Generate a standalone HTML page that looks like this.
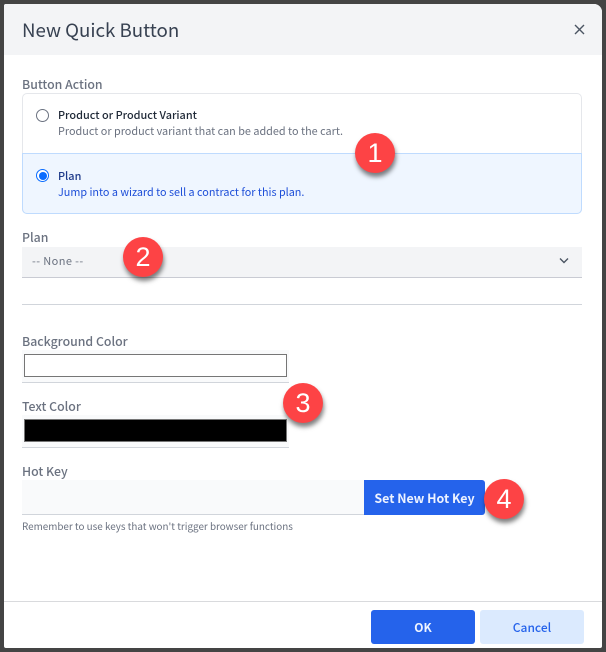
<!DOCTYPE html>
<html><head><meta charset="utf-8">
<style>
*{box-sizing:border-box;margin:0;padding:0}
html,body{width:606px;height:652px;overflow:hidden;background:#444}
body{position:relative;font-family:"Noto Sans CJK JP","Liberation Sans",sans-serif}
.a{position:absolute}
.t{position:absolute;white-space:nowrap;line-height:16px}
.lbl{font-size:12.3px;color:#6b7280;font-weight:500;left:22px}
.badge{position:absolute;width:40px;height:40px;border-radius:50%;background:#fd4345;box-shadow:1px 4px 5px rgba(0,0,0,.5);color:#fff;font:27px/40px "Liberation Sans",sans-serif;text-align:center}
</style></head><body>
<div class="a" id="m" style="left:4px;top:4px;width:598px;height:644px;background:#fff;border-radius:2px 8px 2px 2px;overflow:hidden">
<div class="a" style="left:0;top:0;width:598px;height:51px;background:#f3f4f6"></div>
</div>
<div class="t" style="left:22px;top:18px;font-size:18.7px;line-height:24px;color:#374151">New Quick Button</div>
<svg class="a" style="left:573px;top:23px" width="13" height="13" viewBox="0 0 13 13"><path d="M2 2L11 11M11 2L2 11" stroke="#4b5563" stroke-width="1.4" fill="none"/></svg>

<div class="t lbl" style="top:76px">Button Action</div>
<div class="a" style="left:22px;top:93px;width:560px;height:121px;border:1px solid #e5e7eb;border-radius:5px;background:#fff"></div>
<div class="a" style="left:22px;top:153px;width:560px;height:61px;background:#eff6ff;border:1px solid #bfdbfe;border-radius:0 0 5px 5px"></div>
<div class="a" style="left:36px;top:109px;width:13px;height:13px;border-radius:50%;border:1px solid #6b7280;background:#fff"></div>
<div class="t" style="left:58px;top:107px;font-size:10.9px;font-weight:500;color:#1f2937">Product or Product Variant</div>
<div class="t" style="left:58px;top:123px;font-size:10.85px;color:#6b7280">Product or product variant that can be added to the cart.</div>
<div class="a" style="left:36px;top:169px;width:13px;height:13px;border-radius:50%;border:1px solid #0a6cff;background:#fff"></div>
<div class="a" style="left:38.5px;top:171.5px;width:8px;height:8px;border-radius:50%;background:#0a6cff"></div>
<div class="t" style="left:58px;top:168px;font-size:10.9px;font-weight:500;color:#1e3a8a">Plan</div>
<div class="t" style="left:58px;top:184px;font-size:10.8px;color:#1d4ed8">Jump into a wizard to sell a contract for this plan.</div>

<div class="t lbl" style="top:229px">Plan</div>
<div class="a" style="left:22px;top:247px;width:560px;height:31px;background:#f3f4f6;border-bottom:1px solid #c9cbd3"></div>
<div class="t" style="left:32px;top:253px;font-size:11px;letter-spacing:.4px;color:#6b7280">-- None --</div>
<svg class="a" style="left:558px;top:256px" width="12" height="10" viewBox="0 0 12 10"><path d="M2 2.5L6 6.5L10 2.5" stroke="#4b5563" stroke-width="1.4" fill="none"/></svg>
<div class="a" style="left:22px;top:304px;width:560px;height:1px;background:#d1d5db"></div>

<div class="t lbl" style="top:333px">Background Color</div>
<div class="a" style="left:22px;top:350px;width:267px;height:33px;background:#f9fafb;border-bottom:1px solid #d1d5db"></div>
<div class="a" style="left:24px;top:354px;width:263px;height:23px;background:#fff;border:1px solid #767676"></div>
<div class="t lbl" style="top:398px">Text Color</div>
<div class="a" style="left:22px;top:415px;width:267px;height:33px;background:#f9fafb;border-bottom:1px solid #d1d5db"></div>
<div class="a" style="left:24px;top:419px;width:263px;height:23px;background:#000;border:1px solid #767676"></div>

<div class="t lbl" style="top:463px">Hot Key</div>
<div class="a" style="left:22px;top:480px;width:342px;height:35px;background:#f9fafb;border-bottom:1px solid #d1d5db"></div>
<div class="a" style="left:364px;top:480px;width:121px;height:35px;background:#2563eb;border-radius:0 3px 3px 0;color:#eef3ff;font-size:12.4px;font-weight:700;line-height:37px;text-align:center">Set New Hot Key</div>
<div class="t" style="left:22px;top:518px;font-size:9.87px;color:#6b7280">Remember to use keys that won't trigger browser functions</div>

<div class="a" style="left:4px;top:601px;width:598px;height:1px;background:#d9dadd"></div>
<div class="a" style="left:371px;top:610px;width:104px;height:34px;background:#2563eb;border-radius:3px;color:#eef3ff;font-size:12px;font-weight:700;line-height:35px;text-align:center">OK</div>
<div class="a" style="left:480px;top:610px;width:104px;height:34px;background:#dbeafe;border-radius:3px;color:#2563eb;font-size:12px;font-weight:500;line-height:35px;text-align:center">Cancel</div>

<div class="badge" style="left:355px;top:133px">1</div>
<div class="badge" style="left:123px;top:237px">2</div>
<div class="badge" style="left:283px;top:383px">3</div>
<div class="badge" style="left:484px;top:479px">4</div>
</body></html>
